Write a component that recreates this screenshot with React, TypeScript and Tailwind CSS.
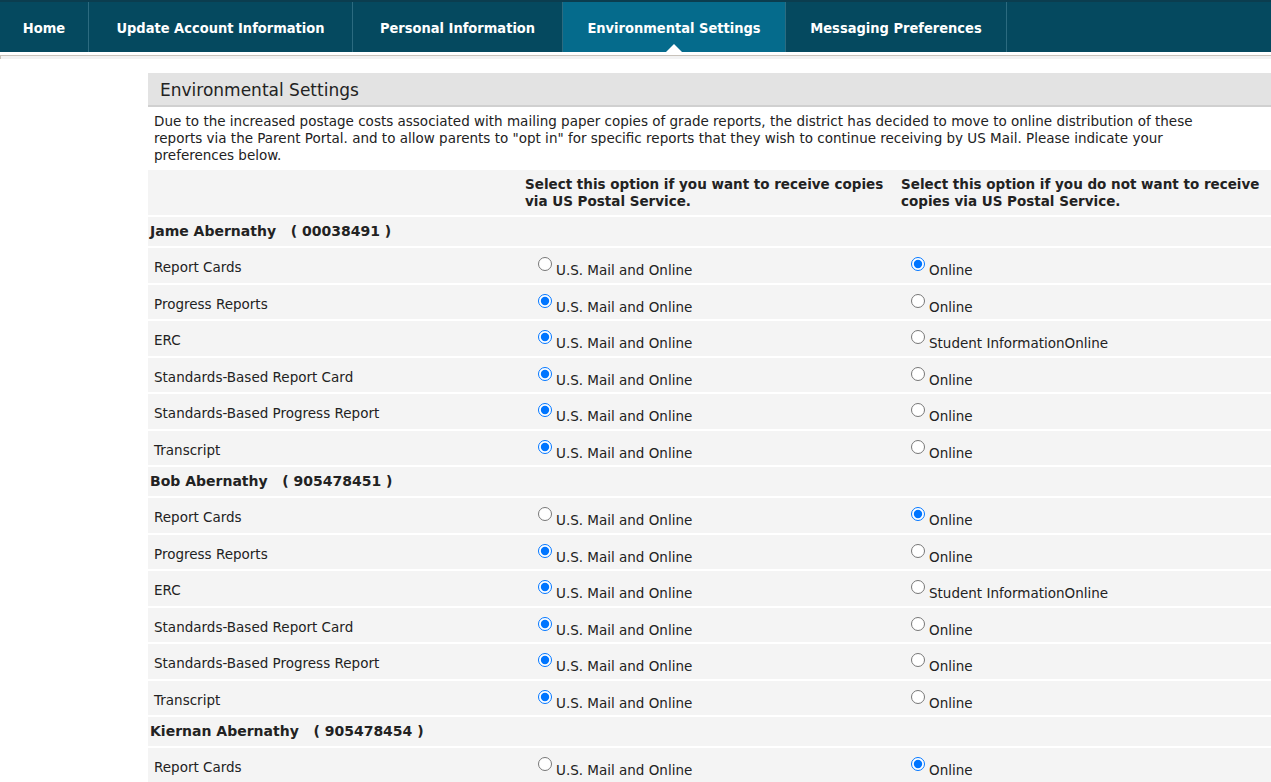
const tabs = ["Home", "Update Account Information", "Personal Information", "Environmental Settings", "Messaging Preferences"];
const tabW = ["w-[89px]", "w-[264px]", "w-[210px]", "w-[223px]", "w-[221px]"];

const items: [string, boolean, string?][] = [
  ["Report Cards", false],
  ["Progress Reports", true],
  ["ERC", true, "Student InformationOnline"],
  ["Standards-Based Report Card", true],
  ["Standards-Based Progress Report", true],
  ["Transcript", true],
];

const students = [
  ["Jame Abernathy", "00038491"],
  ["Bob Abernathy", "905478451"],
  ["Kiernan Abernathy", "905478454"],
];

function Radio({ on }: { on: boolean }) {
  return <input type="radio" readOnly checked={on} className="m-0 mr-[4px] h-[14px] w-[14px] relative top-[-3px]" />;
}

export default function App() {
  return (
    <div className="min-h-screen bg-white text-[13px] text-[#222]" style={{ fontFamily: "'DejaVu Sans', Verdana, sans-serif" }}>
      <div className="h-[52px] bg-[#05495f] border-t-2 border-[#0b3d4f] flex">
        {tabs.map((t, i) => (
          <div
            key={t}
            className={`${tabW[i]} relative flex items-center justify-center pt-[3px] border-r border-[#2c6b80] text-white font-bold text-[14.5px] ${i === 3 ? "bg-[#056b8c]" : ""}`}
            style={{ fontFamily: "'DejaVu Sans Condensed', 'Liberation Sans Narrow', sans-serif" }}
          >
            {t}
            {i === 3 && <div className="absolute bottom-0 left-1/2 -translate-x-1/2 w-0 h-0 border-x-[8px] border-x-transparent border-b-[8px] border-b-white" />}
          </div>
        ))}
      </div>
      <div className="mt-[3px] h-[4px] border-t border-l border-[#c8c2ba] bg-[#f2f2f2]" />
      <div className="ml-[148px] mt-[14px]">
        <div className="h-[34px] bg-[#e3e3e3] border-b-2 border-[#d0d0d0] flex items-center px-3 pt-[3px] text-[17px] text-[#222]">Environmental Settings</div>
        <p className="pl-[6px] pr-[55px] pt-[6px] pb-[6px] leading-[17px] text-[13.5px]">
          Due to the increased postage costs associated with mailing paper copies of grade reports, the district has decided to move to online distribution of these reports via the Parent Portal. and to allow parents to "opt in" for specific reports that they wish to continue receiving by US Mail. Please indicate your preferences below.
        </p>
        <div className="grid grid-cols-[374px_375px_1fr] gap-y-[2px]">
          <div className="bg-[#f4f4f4] h-[45px]" />
          <div className="bg-[#f4f4f4] font-bold px-[3px] pt-[6px] leading-[17px] text-[13.5px]">Select this option if you want to receive copies via US Postal Service.</div>
          <div className="bg-[#f4f4f4] font-bold px-[4px] pt-[6px] leading-[17px] text-[13.5px]">Select this option if you do not want to receive copies via US Postal Service.</div>
          {students.map(([name, id]) => (
            <>
              <div key={name} className="col-span-3 bg-[#f4f4f4] h-[29px] flex items-center px-[2px] font-bold text-[14px] whitespace-pre">
                {name}{"   ( "}{id}{" )"}
              </div>
              {items.map(([label, mail, alt]) => (
                <>
                  <div className="bg-[#f4f4f4] h-[34.5px] pl-[6px] pt-[9px] text-[13.5px]">{label}</div>
                  <div className="bg-[#f4f4f4] pl-[16px] pt-[12px] text-[13.5px] flex items-start"><Radio on={mail} />U.S. Mail and Online</div>
                  <div className="bg-[#f4f4f4] pl-[14px] pt-[12px] text-[13.5px] flex items-start"><Radio on={!mail} />{alt ?? "Online"}</div>
                </>
              ))}
            </>
          ))}
        </div>
      </div>
    </div>
  );
}
